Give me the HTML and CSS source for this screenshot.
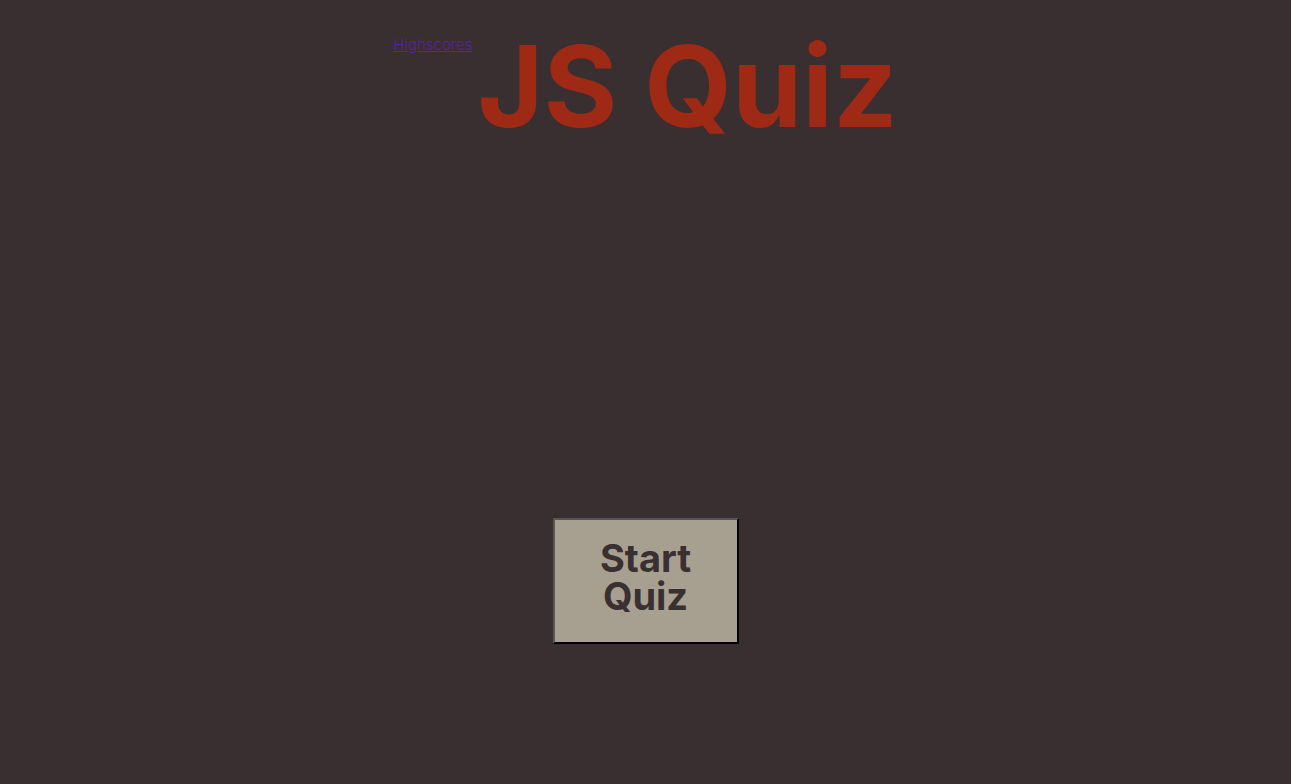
FILE: index.html
```html
<!DOCTYPE html>
<html lang="en">
<head>
<meta charset="utf-8">
<title>JS Quiz</title>
<link rel="stylesheet" href="styles.css">
</head>
<body>
  <header class="top">
    <a class="scores-link" href="#highscores">Highscores</a>
    <h1 class="title">JS Quiz</h1>
  </header>
  <main class="stage">
    <button class="start-btn" type="button">Start Quiz</button>
  </main>
</body>
</html>
```

FILE: styles.css
```css
html, body {
  margin: 0;
  padding: 0;
  background: #392e30;
  font-family: Inter, "Noto Sans", sans-serif;
  height: 100%;
}

.top {
  display: flex;
  justify-content: center;
  align-items: flex-start;
  padding-top: 36px;
}

.scores-link {
  font-family: Inter, sans-serif;
  color: #5a22a8;
  font-size: 15px;
  font-weight: 300;
  line-height: 18px;
  margin-right: 5px;
}

.title {
  margin: 0;
  color: #9e2914;
  font-size: 113px;
  font-weight: 700;
  line-height: 100px;
}

.stage {
  display: flex;
  justify-content: center;
  padding-top: 382px;
}

.start-btn {
  box-sizing: border-box;
  width: 186px;
  height: 126px;
  background: #a7a090;
  color: #3a2f31;
  border: 2px solid;
  border-color: #5a5456 #000 #000 #5a5456;
  font-family: Inter, "Noto Sans", sans-serif;
  font-size: 38px;
  font-weight: 700;
  line-height: 38px;
  padding: 0 16px 8px;
}
```
